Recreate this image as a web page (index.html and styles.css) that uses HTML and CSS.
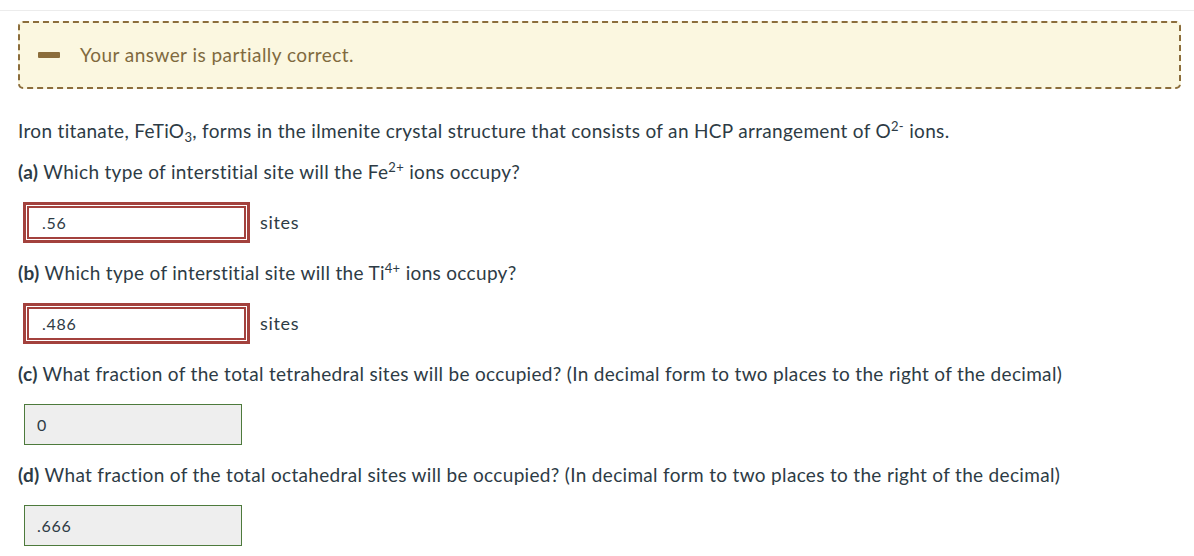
FILE: index.html
```html
<!DOCTYPE html>
<html>
<head>
<meta charset="utf-8">
<link rel="stylesheet" href="styles.css">
</head>
<body>
<div class="topline"></div>
<div class="alert">
  <span class="alert-icon"></span>
  <span class="alert-text">Your answer is partially correct.</span>
</div>
<div class="content">
  <p class="intro">Iron titanate, FeTiO<sub>3</sub>, forms in the ilmenite crystal structure that consists of an HCP arrangement of O<sup>2-</sup> ions.</p>
  <p class="q"><b>(a)</b> Which type of interstitial site will the Fe<sup>2+</sup> ions occupy?</p>
  <div class="row">
    <div class="box-wrong"><div class="box-inner">.56</div></div>
    <span class="unit">sites</span>
  </div>
  <p class="q"><b>(b)</b> Which type of interstitial site will the Ti<sup>4+</sup> ions occupy?</p>
  <div class="row">
    <div class="box-wrong"><div class="box-inner">.486</div></div>
    <span class="unit">sites</span>
  </div>
  <p class="q"><b>(c)</b> What fraction of the total tetrahedral sites will be occupied? (In decimal form to two places to the right of the decimal)</p>
  <div class="row">
    <div class="box-right">0</div>
  </div>
  <p class="q"><b>(d)</b> What fraction of the total octahedral sites will be occupied? (In decimal form to two places to the right of the decimal)</p>
  <div class="row">
    <div class="box-right">.666</div>
  </div>
</div>
</body>
</html>
```

FILE: styles.css
```css
html, body {
  margin: 0;
  padding: 0;
  background: #fff;
}
body {
  font-family: Lato, "Open Sans", sans-serif;
  font-size: 19px;
  letter-spacing: 0.32px;
  color: #2d3b45;
}
.topline {
  height: 10px;
  border-bottom: 1px solid #ececec;
}
.alert {
  box-sizing: border-box;
  margin: 10px 13px 0 18px;
  height: 68px;
  border: 2px dashed #8b6d3b;
  border-radius: 5px;
  background: #fbf7e0;
  display: flex;
  align-items: center;
  padding-left: 18px;
  gap: 20px;
}
.alert-icon {
  width: 22px;
  height: 6px;
  background: #8b6d3b;
  border-radius: 1px;
}
.alert-text {
  color: #806a3e;
  font-size: 19px;
  letter-spacing: 0.45px;
  line-height: 24px;
}
.content {
  padding: 30px 0 0 18px;
  display: flex;
  flex-direction: column;
  gap: 18px;
}
p {
  margin: 0;
  line-height: 24px;
  white-space: nowrap;
}
.intro {
  margin-bottom: -1px;
}
b {
  font-weight: 700;
}
sup, sub {
  font-size: 13px;
  line-height: 0;
  letter-spacing: 0.3px;
}
sup { vertical-align: 7px; }
sub { vertical-align: -4px; }
.row {
  display: flex;
  align-items: center;
  height: 41px;
}
.box-wrong {
  box-sizing: border-box;
  margin-left: 5px;
  width: 227px;
  height: 41px;
  border: 3px solid #a3413d;
  padding: 1px;
  background: #fff;
}
.box-inner {
  box-sizing: border-box;
  height: 100%;
  border: 2px solid #a3413d;
  padding-left: 13px;
  display: flex;
  align-items: center;
  font-size: 16px;
  letter-spacing: 0.7px;
}
.unit {
  margin-left: 10px;
  margin-top: -2px;
  font-size: 18px;
  letter-spacing: 0.7px;
}
.box-right {
  box-sizing: border-box;
  margin-left: 6px;
  width: 218px;
  height: 41px;
  border: 1px solid #4d7a3c;
  background: #eeeeee;
  padding-left: 12px;
  display: flex;
  align-items: center;
  font-size: 16px;
  letter-spacing: 0.7px;
}
```
